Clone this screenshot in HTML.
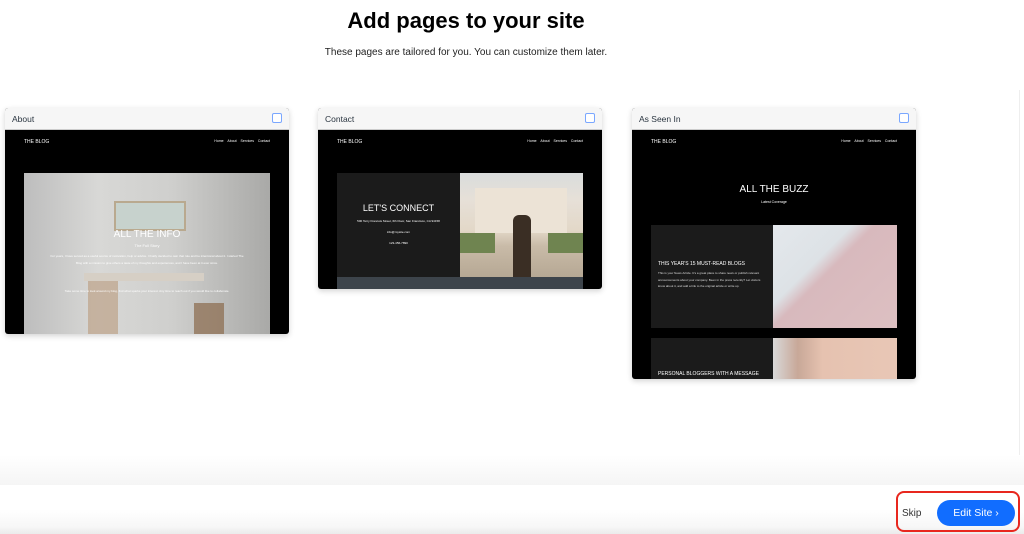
<!DOCTYPE html>
<html><head><meta charset="utf-8">
<style>
*{margin:0;padding:0;box-sizing:border-box}
body{width:1024px;height:534px;overflow:hidden;background:#fff;font-family:"Liberation Sans",sans-serif;position:relative;color:#20303c}
h1{position:absolute;top:8px;left:0;width:932px;text-align:center;font-size:22px;font-weight:bold;color:#000}
.sub{position:absolute;top:47px;left:0;width:932px;text-align:center;font-size:10px;color:#222}
.card{position:absolute;width:284px;background:#000;box-shadow:0 2px 6px rgba(0,0,0,.18);border-radius:3px;overflow:hidden}
.hd{height:22px;background:#f6f6f6;border-bottom:1px solid #ccc;font-size:8.5px;color:#2a3540;padding:6px 7px}
.cb{position:absolute;right:7px;top:5px;width:10px;height:10px;border:1px solid #7aa7ff;border-radius:2px;background:#fff}
.nav{position:relative;height:24px;color:#fff;font-size:5px}
.nav .l{position:absolute;left:19px;top:9px;font-size:5px}
.nav .r{position:absolute;right:19px;top:9px;font-size:3.5px;word-spacing:3px}
.w{color:#fff;text-align:center;position:absolute}
.vline{position:absolute;left:1019px;top:90px;width:1px;height:370px;background:#eee}
</style></head><body>
<h1>Add pages to your site</h1>
<div class="sub">These pages are tailored for you. You can customize them later.</div>

<div class="card" style="left:5px;top:108px;height:226px">
 <div class="hd">About<div class="cb"></div></div>
 <div class="nav"><span class="l">THE BLOG</span><span class="r">Home About Services Contact</span></div>
 <div style="position:absolute;left:19px;top:65px;width:246px;height:161px;background:linear-gradient(90deg,#bdbdbd,#d8d8d6 30%,#cfcfcd 60%,#a9a9a7);">
  <div style="position:absolute;left:90px;top:28px;width:72px;height:30px;border:2px solid #b9a98f;background:#c7d2cd"></div>
  <div style="position:absolute;left:60px;top:100px;width:120px;height:8px;background:#d6cfc5"></div>
  <div style="position:absolute;left:64px;top:108px;width:30px;height:53px;background:#b99a7c;opacity:.6"></div>
  <div style="position:absolute;left:170px;top:130px;width:30px;height:31px;background:#8a6a4c;opacity:.7"></div>
  <div class="w" style="left:0;width:246px;top:56px;font-size:10px">ALL THE INFO</div>
  <div class="w" style="left:0;width:246px;top:70px;font-size:4px">The Full Story</div>
  <div class="w" style="left:26px;width:194px;top:80px;font-size:3px;line-height:7px">For years, I have served as a useful source of motivation, help or advice. I finally decided to own that role and be intentional about it. I started The Blog with a mission to give others a taste of my thoughts and experiences, and I have been at it ever since.</div>
  <div class="w" style="left:26px;width:194px;top:115px;font-size:3px;line-height:7px">Take some time to look around my blog, find what sparks your interest. Any time to reach out if you would like to collaborate.</div>
 </div>
</div>

<div class="card" style="left:318px;top:108px;height:181px">
 <div class="hd">Contact<div class="cb"></div></div>
 <div class="nav"><span class="l">THE BLOG</span><span class="r">Home About Services Contact</span></div>
 <div style="position:absolute;left:19px;top:65px;width:123px;height:104px;background:#1b1b1b">
  <div class="w" style="left:0;width:123px;top:30px;font-size:9px">LET'S CONNECT</div>
  <div class="w" style="left:0;width:123px;top:46px;font-size:3px">500 Terry Francois Street, 6th Floor, San Francisco, CA 94158</div>
  <div class="w" style="left:0;width:123px;top:57px;font-size:3px">info@mysite.com</div>
  <div class="w" style="left:0;width:123px;top:68px;font-size:3px">123-456-7890</div>
 </div>
 <div style="position:absolute;left:142px;top:65px;width:123px;height:104px;background:linear-gradient(180deg,#d9dcdc 0,#e6e0d8 25%,#e3d8c8 55%,#c9bba8 70%,#b6a894 100%)">
  <div style="position:absolute;left:15px;top:15px;width:92px;height:45px;background:#ece3d6"></div>
  <div style="position:absolute;left:0;top:60px;width:35px;height:20px;background:#6f8450"></div>
  <div style="position:absolute;left:88px;top:60px;width:35px;height:20px;background:#6f8450"></div>
  <div style="position:absolute;left:53px;top:42px;width:18px;height:62px;background:#3a2e24;border-radius:6px 6px 0 0"></div>
 </div>
 <div style="position:absolute;left:19px;top:169px;width:246px;height:12px;background:#3d444b"></div>
</div>

<div class="card" style="left:632px;top:108px;height:271px">
 <div class="hd">As Seen In<div class="cb"></div></div>
 <div class="nav"><span class="l">THE BLOG</span><span class="r">Home About Services Contact</span></div>
 <div class="w" style="left:0;width:284px;top:76px;font-size:10px">ALL THE BUZZ</div>
 <div class="w" style="left:0;width:284px;top:92px;font-size:3.5px">Latest Coverage</div>
 <div style="position:absolute;left:19px;top:117px;width:122px;height:103px;background:#1b1b1b">
  <div style="position:absolute;left:7px;top:36px;color:#fff;font-size:5px">THIS YEAR'S 15 MUST-READ BLOGS</div>
  <div style="position:absolute;left:7px;top:45px;width:106px;color:#ddd;font-size:3px;line-height:6.5px">This is your News Article. It's a great place to share news or publish relevant announcements about your company. Been in the press recently? Let visitors know about it, and add a link to the original article or write up.</div>
 </div>
 <div style="position:absolute;left:141px;top:117px;width:124px;height:103px;background:linear-gradient(135deg,#e4e8ec 0,#dde2e6 35%,#d8b9bd 45%,#ddc0c2 100%)"></div>
 <div style="position:absolute;left:19px;top:230px;width:122px;height:41px;background:#1b1b1b">
  <div style="position:absolute;left:7px;top:33px;color:#fff;font-size:5px">PERSONAL BLOGGERS WITH A MESSAGE</div>
 </div>
 <div style="position:absolute;left:141px;top:230px;width:124px;height:41px;background:linear-gradient(90deg,#d9d9d9 0,#c8a898 20%,#e6c2b0 40%,#e8c7b6 100%)"></div>
</div>

<div class="vline"></div>
<div style="position:absolute;left:0;top:455px;width:1024px;height:30px;background:linear-gradient(#fff,#f5f5f5)"></div>
<div style="position:absolute;left:0;top:485px;width:1024px;height:49px;background:linear-gradient(#fff 0,#fff 50%,#f7f7f7 85%,#ebebeb 100%)"></div>
<div style="position:absolute;left:896px;top:491px;width:124px;height:41px;border:2px solid #e8271e;border-radius:8px"></div>
<div style="position:absolute;left:902px;top:508px;font-size:10px;color:#333">Skip</div>
<div style="position:absolute;left:937px;top:500px;width:78px;height:26px;border-radius:13px;background:#116dff;color:#fff;font-size:10.5px;line-height:27px;text-align:center">Edit Site &#8250;</div>
</body></html>
